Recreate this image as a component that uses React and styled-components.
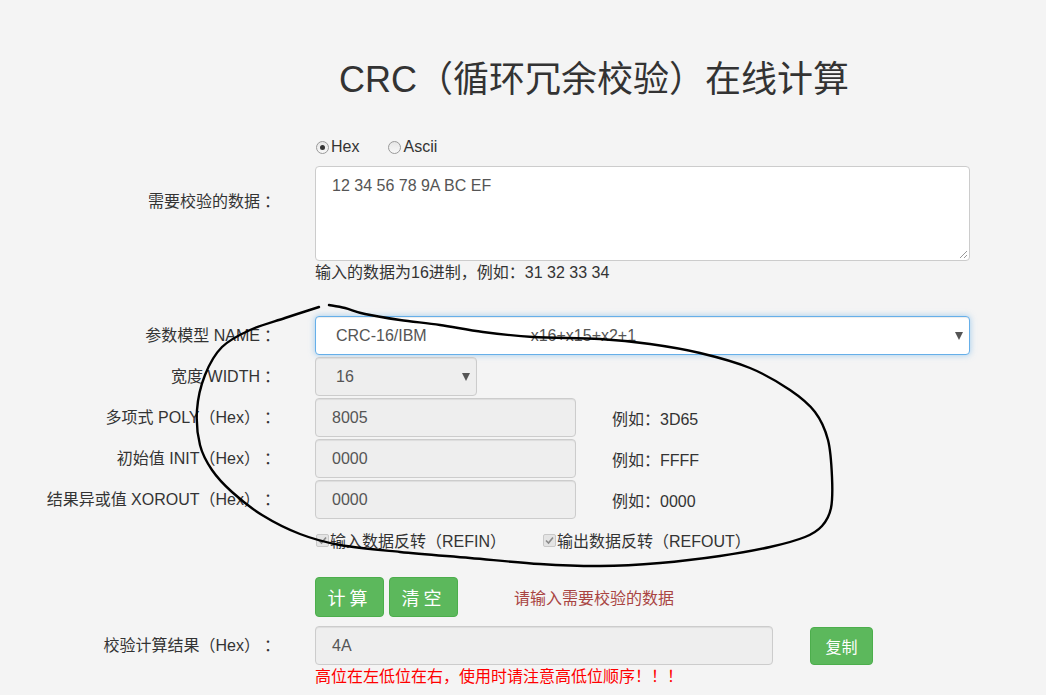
import React from "react";
import styled, { createGlobalStyle } from "styled-components";

const GlobalStyle = createGlobalStyle`
  html, body {
    margin: 0;
    padding: 0;
    background: #f4f4f4;
  }
  body {
    font-family: "Liberation Sans", "Noto Sans CJK SC", sans-serif;
    font-size: 16px;
    color: #333;
    text-spacing-trim: space-all;
  }
`;

const Page = styled.div`
  position: relative;
  width: 1046px;
  height: 695px;
  overflow: hidden;
`;

const Title = styled.h1`
  margin: 0;
  padding: 60px 0 0 142px;
  height: 137px;
  box-sizing: border-box;
  text-align: center;
  font-size: 36px;
  line-height: 40px;
  font-weight: 400;
  color: #333;
`;

const Row = styled.div`
  display: flex;
  align-items: ${(p) => (p.top ? "flex-start" : "center")};
  margin-top: ${(p) => p.gap || 0}px;
`;

const Label = styled.label`
  width: 276px;
  flex-shrink: 0;
  text-align: right;
  line-height: 22px;
  padding-top: ${(p) => p.offset || 0}px;
  white-space: nowrap;
`;

// full-width colon drawn centred in its box, as the reference font does
const Colon = styled.span`
  font-feature-settings: "halt";
  padding: 0 4px;
`;

const Control = styled.div`
  margin-left: 39px;
  display: flex;
  flex-direction: ${(p) => (p.column ? "column" : "row")};
  align-items: ${(p) => (p.column ? "flex-start" : "center")};
`;

const RadioGroup = styled.div`
  display: flex;
  height: 20px;
  align-items: center;
  margin-bottom: 9px;
`;

const RadioItem = styled.span`
  display: flex;
  align-items: center;
  margin-right: 15px;
  margin-left: ${(p) => p.ml || 1}px;
`;

const RadioDot = styled.span`
  width: 11px;
  height: 11px;
  border-radius: 50%;
  border: 1px solid #9a9a9a;
  background: linear-gradient(#e6e6e6, #f8f8f8);
  position: relative;
  margin-right: 2px;

  &::after {
    content: "";
    display: ${(p) => (p.checked ? "block" : "none")};
    position: absolute;
    left: 3px;
    top: 3px;
    width: 5px;
    height: 5px;
    border-radius: 50%;
    background: #333;
  }
`;

const TextArea = styled.div`
  width: 655px;
  height: 95px;
  box-sizing: border-box;
  border: 1px solid #ccc;
  border-radius: 4px;
  background: #fff;
  padding: 8px 16px;
  color: #555;
  line-height: 22px;
  position: relative;
`;

const Grip = styled.svg`
  position: absolute;
  right: 1px;
  bottom: 1px;
`;

const Help = styled.div`
  margin-top: 2px;
  line-height: 20px;
`;

const Field = styled.div`
  width: ${(p) => p.w}px;
  height: 39px;
  box-sizing: border-box;
  border: 1px solid ${(p) => (p.focus ? "#66afe9" : "#ccc")};
  box-shadow: ${(p) =>
    p.focus
      ? "inset 0 1px 1px rgba(0,0,0,.075), 0 0 6px rgba(102,175,233,.6)"
      : "inset 0 1px 1px rgba(0,0,0,.075)"};
  border-radius: 4px;
  background: ${(p) => (p.focus ? "#fff" : "#eee")};
  color: #555;
  display: flex;
  align-items: center;
  padding-left: ${(p) => p.pad || 16}px;
  position: relative;
  white-space: pre;
`;

const Arrow = styled.span`
  position: absolute;
  right: 6px;
  top: 15px;
  width: 0;
  height: 0;
  border-left: 4px solid transparent;
  border-right: 4px solid transparent;
  border-top: 8px solid #555;
`;

const Poly = styled.span`
  margin-left: 104px;
`;

const Hint = styled.span`
  margin-left: 36px;
`;

const Checks = styled.div`
  display: flex;
  align-items: center;
  height: 20px;
  margin-left: 315px;
  margin-top: 11px;
`;

const CheckItem = styled.span`
  display: flex;
  align-items: center;
  margin-right: 36px;
  margin-left: 1px;
`;

const CheckBox = styled.span`
  width: 11px;
  height: 11px;
  border: 1px solid #c8c8c8;
  background: #e4e4e4;
  border-radius: 2px;
  margin-right: 1px;
  display: flex;
  align-items: center;
  justify-content: center;
`;

const Actions = styled.div`
  display: flex;
  align-items: center;
  margin-left: 315px;
  margin-top: 27px;
`;

const Button = styled.button`
  width: ${(p) => p.w || 69}px;
  height: ${(p) => p.h || 40}px;
  margin-right: 5px;
  margin-left: ${(p) => p.ml || 0}px;
  border: 1px solid #4cae4c;
  border-radius: 4px;
  background: #5cb85c;
  color: #fff;
  font-family: inherit;
  font-size: ${(p) => p.size || 18}px;
  letter-spacing: ${(p) => p.spacing || 0}px;
  padding: 0;
  cursor: pointer;
`;

const Message = styled.span`
  margin-left: 51px;
  color: #a94442;
`;

const Warning = styled.div`
  margin-left: 315px;
  margin-top: 2px;
  line-height: 20px;
  color: #ff0000;
`;

const Scribble = styled.svg`
  position: absolute;
  left: 0;
  top: 0;
  pointer-events: none;
`;

const loop = [
  [329, 305], [345, 308], [365, 314], [400, 320], [440, 325], [483, 332],
  [533, 337], [600, 339], [650, 344], [700, 353], [750, 368], [790, 390],
  [815, 412], [828, 440], [832, 477], [831, 508], [822, 526], [805, 537],
  [770, 547], [720, 556], [660, 563], [600, 566], [540, 564], [470, 558],
  [400, 552], [340, 545], [300, 534], [262, 515], [232, 492], [212, 470],
  [200, 445], [197, 410], [205, 375], [222, 347], [250, 330], [285, 318],
  [319, 307],
];

// catmull-rom -> cubic bezier
function smooth(pts) {
  let d = `M${pts[0][0]},${pts[0][1]}`;
  for (let i = 0; i < pts.length - 1; i++) {
    const p0 = pts[i - 1] || pts[i];
    const p1 = pts[i];
    const p2 = pts[i + 1];
    const p3 = pts[i + 2] || p2;
    const c1 = [p1[0] + (p2[0] - p0[0]) / 6, p1[1] + (p2[1] - p0[1]) / 6];
    const c2 = [p2[0] - (p3[0] - p1[0]) / 6, p2[1] - (p3[1] - p1[1]) / 6];
    d += ` C${c1[0]},${c1[1]} ${c2[0]},${c2[1]} ${p2[0]},${p2[1]}`;
  }
  return d;
}

const Tick = () => (
  <svg width="9" height="9" viewBox="0 0 9 9">
    <path d="M1 4.5 L3.5 7 L8 1.5" fill="none" stroke="#8a8a8a" strokeWidth="1.6" />
  </svg>
);

const FormLabel = ({ children, offset }) => (
  <Label offset={offset}>
    {children}
    <Colon>：</Colon>
  </Label>
);

export default function App() {
  return (
    <Page>
      <GlobalStyle />
      <Title>CRC（循环冗余校验）在线计算</Title>

      <Row top>
        <FormLabel offset={54}>需要校验的数据</FormLabel>
        <Control column>
          <RadioGroup>
            <RadioItem>
              <RadioDot checked />
              Hex
            </RadioItem>
            <RadioItem ml={14}>
              <RadioDot />
              Ascii
            </RadioItem>
          </RadioGroup>
          <TextArea>
            12 34 56 78 9A BC EF
            <Grip width="10" height="10" viewBox="0 0 10 10">
              <path d="M9 2 L2 9 M9 6 L6 9" stroke="#999" strokeWidth="1" />
            </Grip>
          </TextArea>
          <Help>输入的数据为16进制，例如：31 32 33 34</Help>
        </Control>
      </Row>

      <Row gap={33}>
        <FormLabel>参数模型 NAME</FormLabel>
        <Control>
          <Field w={655} focus pad={20}>
            CRC-16/IBM
            <Poly>x16+x15+x2+1</Poly>
            <Arrow />
          </Field>
        </Control>
      </Row>

      <Row gap={2}>
        <FormLabel>宽度 WIDTH</FormLabel>
        <Control>
          <Field w={162} pad={20}>
            16
            <Arrow />
          </Field>
        </Control>
      </Row>

      <Row gap={2}>
        <FormLabel>多项式 POLY（Hex）</FormLabel>
        <Control>
          <Field w={261}>8005</Field>
          <Hint>例如：3D65</Hint>
        </Control>
      </Row>

      <Row gap={2}>
        <FormLabel>初始值 INIT（Hex）</FormLabel>
        <Control>
          <Field w={261}>0000</Field>
          <Hint>例如：FFFF</Hint>
        </Control>
      </Row>

      <Row gap={2}>
        <FormLabel>结果异或值 XOROUT（Hex）</FormLabel>
        <Control>
          <Field w={261}>0000</Field>
          <Hint>例如：0000</Hint>
        </Control>
      </Row>

      <Checks>
        <CheckItem>
          <CheckBox>
            <Tick />
          </CheckBox>
          输入数据反转（REFIN）
        </CheckItem>
        <CheckItem>
          <CheckBox>
            <Tick />
          </CheckBox>
          输出数据反转（REFOUT）
        </CheckItem>
      </Checks>

      <Actions>
        <Button spacing={4}>计算</Button>
        <Button spacing={4}>清空</Button>
        <Message>请输入需要校验的数据</Message>
      </Actions>

      <Row gap={9}>
        <FormLabel>校验计算结果（Hex）</FormLabel>
        <Control>
          <Field w={458}>4A</Field>
          <Button w={63} h={38} size={16} ml={37}>
            复制
          </Button>
        </Control>
      </Row>

      <Warning>高位在左低位在右，使用时请注意高低位顺序！！！</Warning>

      <Scribble width="1046" height="695" viewBox="0 0 1046 695">
        <path
          d={smooth(loop)}
          fill="none"
          stroke="#000"
          strokeWidth="2.4"
          strokeLinecap="round"
          strokeLinejoin="round"
        />
      </Scribble>
    </Page>
  );
}
